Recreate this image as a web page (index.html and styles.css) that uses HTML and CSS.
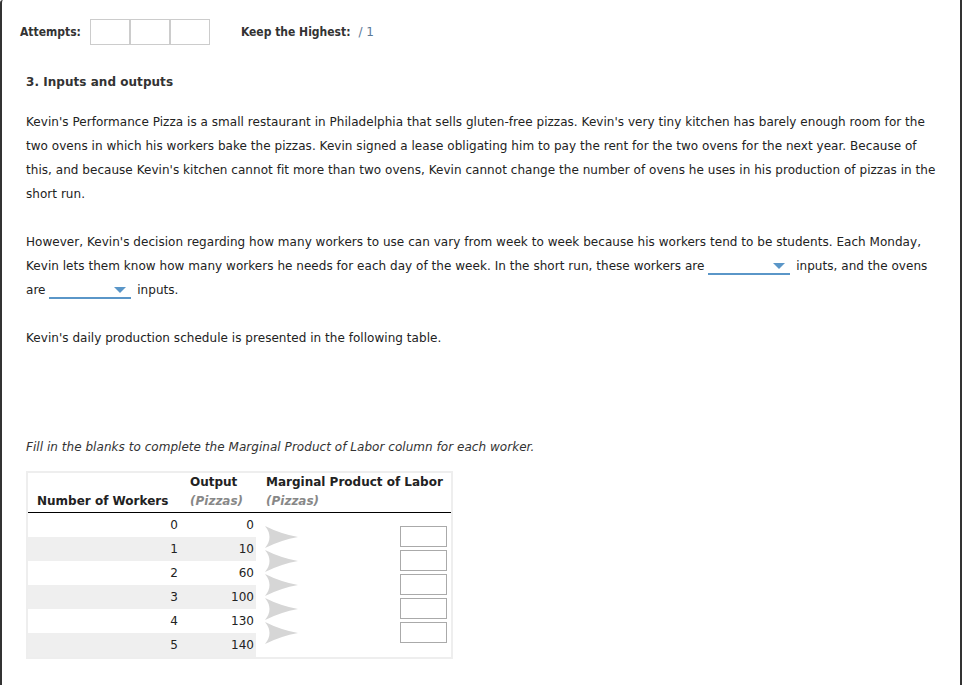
FILE: index.html
```html
<!DOCTYPE html>
<html>
<head>
<meta charset="utf-8">
<link rel="stylesheet" href="styles.css">
</head>
<body>
<div class="page">
  <div class="attempts">
    <span class="label">Attempts:</span>
    <span class="boxes"><span class="box"></span><span class="box"></span><span class="box"></span></span>
    <span class="label keep">Keep the Highest:</span>
    <span class="score">/ 1</span>
  </div>
  <div class="content">
    <h2 class="title">3. Inputs and outputs</h2>
    <p class="para">Kevin's Performance Pizza is a small restaurant in Philadelphia that sells gluten-free pizzas. Kevin's very tiny kitchen has barely enough room for the two ovens in which his workers bake the pizzas. Kevin signed a lease obligating him to pay the rent for the two ovens for the next year. Because of this, and because Kevin's kitchen cannot fit more than two ovens, Kevin cannot change the number of ovens he uses in his production of pizzas in the short run.</p>
    <p class="para">However, Kevin's decision regarding how many workers to use can vary from week to week because his workers tend to be students. Each Monday, Kevin lets them know how many workers he needs for each day of the week. In the short run, these workers are <span class="dropdown"></span> inputs, and the ovens are <span class="dropdown"></span> inputs.</p>
    <p class="para">Kevin's daily production schedule is presented in the following table.</p>
    <p class="instr">Fill in the blanks to complete the Marginal Product of Labor column for each worker.</p>
    <table class="prod">
      <thead>
        <tr>
          <th class="c1"><br>Number of Workers</th>
          <th class="c2">Output<br><span class="unit">(Pizzas)</span></th>
          <th class="c3">Marginal Product of Labor<br><span class="unit">(Pizzas)</span></th>
        </tr>
      </thead>
      <tbody>
        <tr class="r0"><td class="n">0</td><td class="o">0</td>
          <td class="mpl" rowspan="6">
            <div class="mplgrid">
              <div class="arrows">
                <svg class="chev" width="34" height="24" viewBox="0 0 34 24"><path d="M1 1 Q17 9 34 12 Q17 15 1 23 Q10 12 1 1Z" fill="#d6d6d6"/></svg>
                <svg class="chev" width="34" height="24" viewBox="0 0 34 24"><path d="M1 1 Q17 9 34 12 Q17 15 1 23 Q10 12 1 1Z" fill="#d6d6d6"/></svg>
                <svg class="chev" width="34" height="24" viewBox="0 0 34 24"><path d="M1 1 Q17 9 34 12 Q17 15 1 23 Q10 12 1 1Z" fill="#d6d6d6"/></svg>
                <svg class="chev" width="34" height="24" viewBox="0 0 34 24"><path d="M1 1 Q17 9 34 12 Q17 15 1 23 Q10 12 1 1Z" fill="#d6d6d6"/></svg>
                <svg class="chev" width="34" height="24" viewBox="0 0 34 24"><path d="M1 1 Q17 9 34 12 Q17 15 1 23 Q10 12 1 1Z" fill="#d6d6d6"/></svg>
              </div>
              <div class="inputs">
                <span class="inp"></span><span class="inp"></span><span class="inp"></span><span class="inp"></span><span class="inp"></span>
              </div>
            </div>
          </td>
        </tr>
        <tr class="r1"><td class="n">1</td><td class="o">10</td></tr>
        <tr class="r0"><td class="n">2</td><td class="o">60</td></tr>
        <tr class="r1"><td class="n">3</td><td class="o">100</td></tr>
        <tr class="r0"><td class="n">4</td><td class="o">130</td></tr>
        <tr class="r1"><td class="n">5</td><td class="o">140</td></tr>
      </tbody>
    </table>
  </div>
</div>
</body>
</html>
```
FILE: styles.css
```css
html, body {
  margin: 0;
  padding: 0;
  background: #fff;
}
body {
  font-family: "DejaVu Sans", Verdana, sans-serif;
  font-size: 12px;
  color: #222;
}
.page {
  box-sizing: border-box;
  width: 962px;
  min-height: 685px;
  border-left: 2px solid #333;
  border-right: 2px solid #333;
  border-top-left-radius: 3px;
}
.attempts {
  display: flex;
  align-items: center;
  padding: 19px 0 0 18px;
  height: 26px;
  color: #333;
}
.label {
  font-family: "DejaVu Sans Condensed", "DejaVu Sans", sans-serif;
  font-weight: bold;
  font-size: 12px;
}
.boxes {
  display: flex;
  margin-left: 9px;
}
.box {
  box-sizing: border-box;
  width: 40px;
  height: 26px;
  border: 1px solid #ccc;
}
.keep {
  margin-left: 31px;
}
.score {
  margin-left: 8px;
  color: #5b7896;
}
.content {
  padding: 0 20px 0 24px;
  letter-spacing: 0.04px;
}
.title {
  margin: 25px 0 0 0;
  font-size: 12px;
  font-weight: bold;
  line-height: 24px;
  color: #333;
}
.para {
  margin: 16px 0 24px 0;
  line-height: 24px;
}
.para + .para {
  margin-top: 0;
}
.dropdown {
  display: inline-block;
  box-sizing: border-box;
  width: 82px;
  height: 16px;
  border-bottom: 2px solid #5a96c8;
  vertical-align: -5px;
  margin: 0 2px 0 0;
}
.dropdown::after {
  content: "";
  float: right;
  width: 0;
  height: 0;
  margin: 4px 5px 0 0;
  border-left: 6.5px solid transparent;
  border-right: 6.5px solid transparent;
  border-top: 6px solid #5a96c8;
}
.instr {
  margin: 85px 0 12px 0;
  line-height: 24px;
  font-style: italic;
  color: #333;
}
.prod {
  border-collapse: collapse;
  border: 2px solid #eee;
  width: 427px;
  letter-spacing: 0;
}
.prod th {
  font-weight: bold;
  text-align: left;
  line-height: 19px;
  padding: 0 0 1px 0;
  vertical-align: bottom;
  border-bottom: 1px solid #000;
  white-space: nowrap;
}
.prod th.c1 {
  width: 157px;
  padding-left: 9px;
  box-sizing: border-box;
}
.prod th.c2 {
  width: 72px;
  padding-left: 6px;
  box-sizing: border-box;
}
.prod th.c3 {
  padding-left: 10px;
}
.unit {
  font-style: italic;
  font-weight: bold;
  color: #888;
}
.prod td {
  padding: 0;
  height: 24px;
  line-height: 24px;
}
.prod td.n {
  text-align: right;
  padding-right: 6px;
}
.prod td.o {
  text-align: right;
  padding-right: 2px;
}
.r1 td.n, .r1 td.o {
  background: #efefef;
}
.prod td.mpl {
  vertical-align: top;
  background: #fff;
}
.mplgrid {
  display: flex;
  justify-content: space-between;
  padding: 0 4px 0 8px;
}
.arrows {
  display: flex;
  flex-direction: column;
  padding-top: 12px;
}
.chev {
  display: block;
}
.inputs {
  display: flex;
  flex-direction: column;
  gap: 3px;
  padding-top: 13px;
}
.inp {
  display: block;
  box-sizing: border-box;
  width: 47px;
  height: 21px;
  border: 1px solid #aaa;
}
```
